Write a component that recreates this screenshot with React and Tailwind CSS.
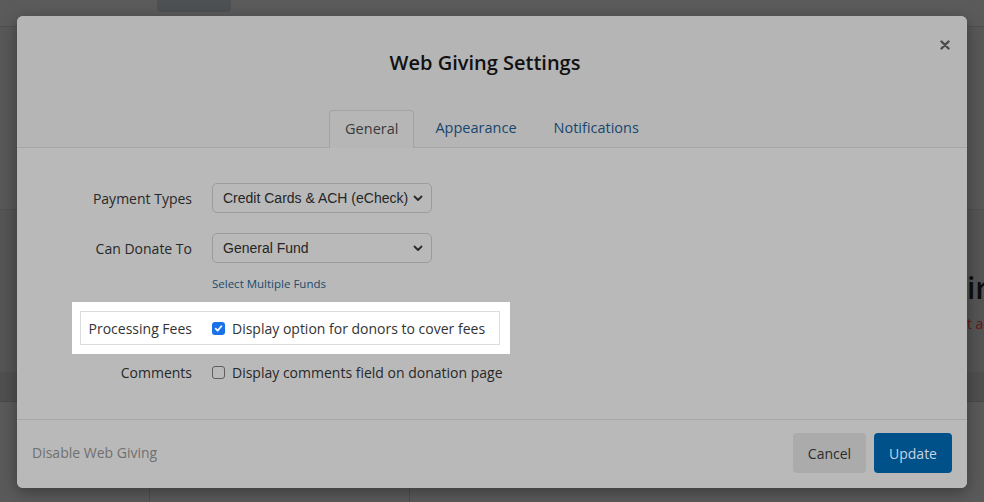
import React from "react";

const sans = { fontFamily: '"Open Sans", "Noto Sans", sans-serif' };

function Chevron() {
  return (
    <svg width="10" height="7" viewBox="0 0 10 7" className="shrink-0">
      <path d="M1.5 1.5 L5 5 L8.5 1.5" fill="none" stroke="#2a2a2a" strokeWidth="1.8" strokeLinecap="round" strokeLinejoin="round" />
    </svg>
  );
}

function FakeSelect({ value }) {
  return (
    <div
      className="flex h-[30px] w-[220px] items-center justify-between rounded-[5px] border border-[#9c9c9c] bg-[#b9b9b9] pl-[10px] pr-[8px] text-[14px] text-[#252525]"
      style={{ fontFamily: '"Liberation Sans", Arial, sans-serif' }}
    >
      <span>{value}</span>
      <Chevron />
    </div>
  );
}

function Row({ label, children }) {
  return (
    <div className="flex items-center px-[9px]">
      <div className="flex w-[103px] shrink-0 justify-end whitespace-nowrap text-[14px] text-[#282828]">
        <span>{label}</span>
      </div>
      <div className="ml-[20px] flex items-center">{children}</div>
    </div>
  );
}

export default function App() {
  return (
    <div className="relative h-[502px] w-[984px] overflow-hidden bg-[#575757]" style={sans}>
      {/* page behind the overlay */}
      <div className="flex h-[27px] border-b border-[#4f4f4f] bg-[#5b5b5b]">
        <div className="ml-[157px] h-[12px] w-[74px] rounded-b-[4px] bg-[#4e5154]" />
      </div>
      <div className="h-[183px] border-b border-[#505050] bg-[#585858]" />
      <div className="flex h-[162px] flex-col bg-[#545454]">
        <div className="pl-[951px] pt-[58px] whitespace-nowrap text-[30px] font-semibold leading-[40px] text-[#0e0e0e]">First Steps</div>
        <div className="pl-[948px] pt-[6px] whitespace-nowrap text-[14px] leading-[20px] text-[#6b1616]">Not active</div>
      </div>
      <div className="h-[30px] border-b border-[#4a4a4a] bg-[#4f4f4f]" />
      <div className="flex h-[100px] bg-[#5a5a5a]">
        <div className="w-[150px] border-r border-[#4d4d4d]" />
        <div className="w-[260px] border-r border-[#4d4d4d]" />
        <div className="flex-1" />
      </div>

      {/* modal over the page */}
      <div className="absolute left-[17px] top-[16px] flex h-[472px] w-[950px] flex-col rounded-[6px] bg-[#b8b8b8] shadow-[0_4px_16px_rgba(0,0,0,0.35)]">
        <div className="relative flex flex-col items-center rounded-t-[6px] border-b border-[#a6a6a6] bg-[#b5b5b5]">
          <button className="absolute right-[17px] top-[24px] flex h-[10px] w-[10px] items-center justify-center">
            <svg width="10" height="10" viewBox="0 0 10 10">
              <path d="M1.5 1.5 L8.5 8.5 M8.5 1.5 L1.5 8.5" stroke="#4b4b4b" strokeWidth="2.4" strokeLinecap="round" />
            </svg>
          </button>
          <h1 className="pr-[14px] pt-[33px] text-[20px] font-semibold leading-[28px] text-[#111111]">Web Giving Settings</h1>
          <div className="-mb-px mt-[33px] flex items-end gap-[5px]">
            <div className="flex h-[38px] items-center rounded-t-[4px] border border-b-0 border-[#a3a3a3] bg-[#b6b6b6] px-[15px] pb-[2px] text-[14.5px] text-[#3a3a3a]">General</div>
            <div className="flex h-[38px] items-center px-[16px] pb-[2px] text-[14.5px] text-[#17466e]">Appearance</div>
            <div className="flex h-[38px] items-center px-[16px] pb-[2px] text-[14.5px] text-[#17466e]">Notifications</div>
          </div>
        </div>

        <div className="flex flex-1 flex-col bg-[#b9b9b9] pl-[63px] pt-[35px]">
          <Row label="Payment Types">
            <FakeSelect value="Credit Cards & ACH (eCheck)" />
          </Row>
          <div className="mt-[20px]">
            <Row label="Can Donate To">
              <FakeSelect value="General Fund" />
            </Row>
          </div>
          <div className="ml-[132px] mt-[13px] text-[11.5px] leading-[16px] text-[#1a4a6e]">Select Multiple Funds</div>

          <div className="-ml-[8px] mt-[10px] w-[438px] bg-white pb-[9px] pl-[8px] pr-[10px] pt-[9px]">
            <div className="flex h-[34px] items-center border border-[#dcdcdc] px-[8px]">
              <div className="flex w-[103px] shrink-0 justify-end whitespace-nowrap text-[14px] text-[#333333]">
                <span>Processing Fees</span>
              </div>
              <div className="ml-[20px] flex items-center">
                <span className="flex h-[13px] w-[13px] items-center justify-center rounded-[3px] bg-[#1a72e8]">
                  <svg width="9" height="9" viewBox="0 0 9 9">
                    <path d="M1.6 4.6 L3.6 6.6 L7.4 2.2" fill="none" stroke="white" strokeWidth="1.7" strokeLinecap="round" strokeLinejoin="round" />
                  </svg>
                </span>
                <span className="ml-[7px] whitespace-nowrap text-[14px] text-[#333333]">Display option for donors to cover fees</span>
              </div>
            </div>
          </div>

          <div className="mt-[8px]">
            <Row label="Comments">
              <span className="h-[13px] w-[13px] rounded-[3px] border border-[#5e5e5e] bg-[#b9b9b9]" />
              <span className="ml-[7px] whitespace-nowrap text-[14px] text-[#282828]">Display comments field on donation page</span>
            </Row>
          </div>
        </div>

        <div className="flex h-[69px] items-center justify-between rounded-b-[6px] border-t border-[#a7a7a7] bg-[#b9b9b9] px-[15px]">
          <span className="-mt-[3px] text-[14px] text-[#707070]">Disable Web Giving</span>
          <div className="-mt-[2px] flex gap-[8px]">
            <button className="h-[40px] w-[73px] rounded-[4px] bg-[#ababab] text-[14px] text-[#2b2b2b]">Cancel</button>
            <button className="h-[40px] w-[78px] rounded-[4px] bg-[#00508a] text-[14px] text-[#c6d3e1]">Update</button>
          </div>
        </div>
      </div>
    </div>
  );
}
